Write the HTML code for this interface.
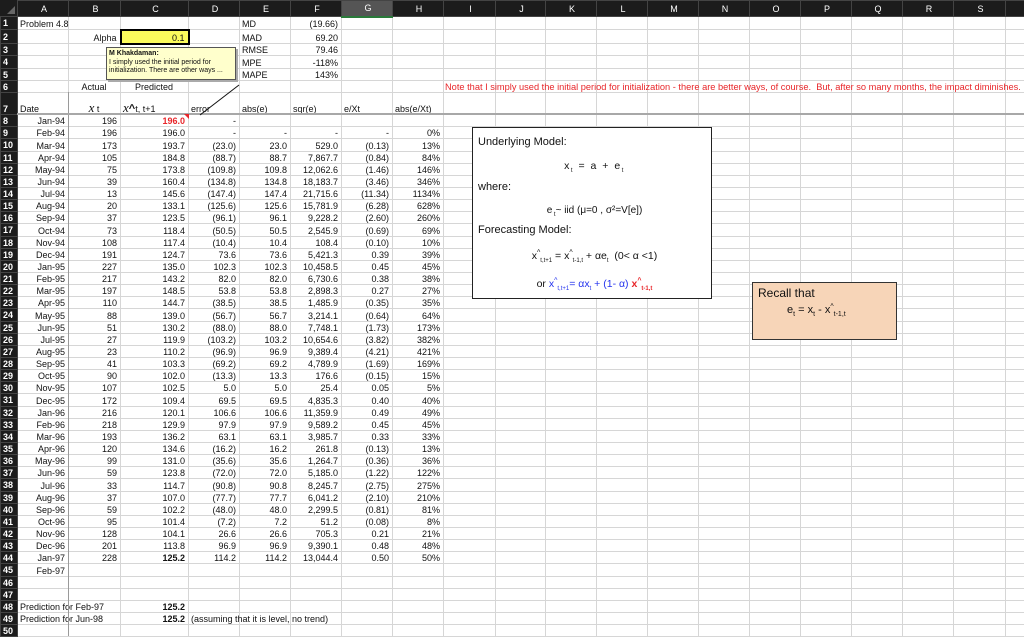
<!DOCTYPE html>
<html><head><meta charset="utf-8"><style>
*{margin:0;padding:0;box-sizing:border-box}
body{width:1024px;height:636px;overflow:hidden;background:#fff;font-family:"Liberation Sans",sans-serif;font-size:9px;color:#111;position:relative}
table{border-collapse:collapse;table-layout:fixed;position:absolute;left:0;top:0;width:1024px}
td{border:1px solid #d6d6d6;padding:0 3px 0 2px;white-space:nowrap;text-align:right;line-height:10px;overflow:visible;vertical-align:bottom}
th{background:#1c1c1c;color:#fff;font-weight:bold;border:1px solid #444;text-align:left;padding-left:2px;font-size:9px;line-height:10px}
thead th{text-align:center;font-weight:normal;height:16px;vertical-align:middle}
.l{text-align:left}
.c{text-align:center}
.b{font-weight:bold}
tr.h13 td,tr.h13 th{height:13px}
tbody tr td,tbody tr th{height:12px}
.ab{position:absolute}
sub,sup{line-height:0}
.bx div{position:absolute;left:5px;right:0;line-height:13px;white-space:nowrap}
</style></head><body>
<table>
<colgroup><col style="width:17px"><col style="width:51px"><col style="width:52px"><col style="width:68px"><col style="width:51px"><col style="width:51px"><col style="width:51px"><col style="width:51px"><col style="width:51px"><col style="width:52px"><col style="width:50px"><col style="width:51px"><col style="width:51px"><col style="width:51px"><col style="width:51px"><col style="width:51px"><col style="width:51px"><col style="width:51px"><col style="width:51px"><col style="width:52px"><col style="width:19px"></colgroup>
<thead><tr><th></th><th>A</th><th>B</th><th>C</th><th>D</th><th>E</th><th>F</th><th style="background:#555;border-bottom:2px solid #2a7a3a">G</th><th>H</th><th>I</th><th>J</th><th>K</th><th>L</th><th>M</th><th>N</th><th>O</th><th>P</th><th>Q</th><th>R</th><th>S</th><th></th></tr></thead>
<tbody>
<tr style="height:13px"><th style="height:13px">1</th><td class="l" style="height:13px">Problem 4.8</td><td></td><td></td><td></td><td class="l">MD</td><td>(19.66)</td><td></td><td></td><td></td><td></td><td></td><td></td><td></td><td></td><td></td><td></td><td></td><td></td><td></td><td></td></tr>
<tr><th style="height:14px">2</th><td style="height:14px"></td><td>Alpha</td><td style="background:#fbfb5c;border:2px solid #000">0.1</td><td></td><td class="l">MAD</td><td>69.20</td><td></td><td></td><td></td><td></td><td></td><td></td><td></td><td></td><td></td><td></td><td></td><td></td><td></td><td></td></tr>
<tr><th>3</th><td></td><td></td><td></td><td></td><td class="l">RMSE</td><td>79.46</td><td></td><td></td><td></td><td></td><td></td><td></td><td></td><td></td><td></td><td></td><td></td><td></td><td></td><td></td></tr>
<tr><th style="height:13px">4</th><td style="height:13px"></td><td></td><td></td><td></td><td class="l">MPE</td><td>-118%</td><td></td><td></td><td></td><td></td><td></td><td></td><td></td><td></td><td></td><td></td><td></td><td></td><td></td><td></td></tr>
<tr><th>5</th><td></td><td></td><td></td><td></td><td class="l">MAPE</td><td>143%</td><td></td><td></td><td></td><td></td><td></td><td></td><td></td><td></td><td></td><td></td><td></td><td></td><td></td><td></td></tr>
<tr><th>6</th><td></td><td class="c">Actual</td><td class="c">Predicted</td><td></td><td></td><td></td><td></td><td></td><td></td><td></td><td></td><td></td><td></td><td></td><td></td><td></td><td></td><td></td><td></td><td></td></tr>
<tr><th style="height:22px;vertical-align:bottom">7</th><td class="l" style="height:22px">Date</td><td class="c"><i style="font-family:'Liberation Serif',serif;font-size:13px">x</i> t</td><td class="l"><i style="font-family:'Liberation Serif',serif;font-size:13px">x</i><b style="font-size:11px">^</b>t, t+1</td><td class="l">error</td><td class="l">abs(e)</td><td class="l">sqr(e)</td><td class="l">e/Xt</td><td class="l">abs(e/Xt)</td><td></td><td></td><td></td><td></td><td></td><td></td><td></td><td></td><td></td><td></td><td></td><td></td></tr>
<tr><th>8</th><td>Jan-94</td><td>196</td><td class="b" style="color:#e8262a">196.0</td><td>-</td><td></td><td></td><td></td><td></td><td></td><td></td><td></td><td></td><td></td><td></td><td></td><td></td><td></td><td></td><td></td><td></td></tr>
<tr><th>9</th><td>Feb-94</td><td>196</td><td>196.0</td><td>-</td><td>-</td><td>-</td><td>-</td><td>0%</td><td></td><td></td><td></td><td></td><td></td><td></td><td></td><td></td><td></td><td></td><td></td><td></td></tr>
<tr class="h13"><th>10</th><td>Mar-94</td><td>173</td><td>193.7</td><td>(23.0)</td><td>23.0</td><td>529.0</td><td>(0.13)</td><td>13%</td><td></td><td></td><td></td><td></td><td></td><td></td><td></td><td></td><td></td><td></td><td></td><td></td></tr>
<tr><th>11</th><td>Apr-94</td><td>105</td><td>184.8</td><td>(88.7)</td><td>88.7</td><td>7,867.7</td><td>(0.84)</td><td>84%</td><td></td><td></td><td></td><td></td><td></td><td></td><td></td><td></td><td></td><td></td><td></td><td></td></tr>
<tr><th>12</th><td>May-94</td><td>75</td><td>173.8</td><td>(109.8)</td><td>109.8</td><td>12,062.6</td><td>(1.46)</td><td>146%</td><td></td><td></td><td></td><td></td><td></td><td></td><td></td><td></td><td></td><td></td><td></td><td></td></tr>
<tr><th>13</th><td>Jun-94</td><td>39</td><td>160.4</td><td>(134.8)</td><td>134.8</td><td>18,183.7</td><td>(3.46)</td><td>346%</td><td></td><td></td><td></td><td></td><td></td><td></td><td></td><td></td><td></td><td></td><td></td><td></td></tr>
<tr><th>14</th><td>Jul-94</td><td>13</td><td>145.6</td><td>(147.4)</td><td>147.4</td><td>21,715.6</td><td>(11.34)</td><td>1134%</td><td></td><td></td><td></td><td></td><td></td><td></td><td></td><td></td><td></td><td></td><td></td><td></td></tr>
<tr><th>15</th><td>Aug-94</td><td>20</td><td>133.1</td><td>(125.6)</td><td>125.6</td><td>15,781.9</td><td>(6.28)</td><td>628%</td><td></td><td></td><td></td><td></td><td></td><td></td><td></td><td></td><td></td><td></td><td></td><td></td></tr>
<tr><th>16</th><td>Sep-94</td><td>37</td><td>123.5</td><td>(96.1)</td><td>96.1</td><td>9,228.2</td><td>(2.60)</td><td>260%</td><td></td><td></td><td></td><td></td><td></td><td></td><td></td><td></td><td></td><td></td><td></td><td></td></tr>
<tr class="h13"><th>17</th><td>Oct-94</td><td>73</td><td>118.4</td><td>(50.5)</td><td>50.5</td><td>2,545.9</td><td>(0.69)</td><td>69%</td><td></td><td></td><td></td><td></td><td></td><td></td><td></td><td></td><td></td><td></td><td></td><td></td></tr>
<tr><th>18</th><td>Nov-94</td><td>108</td><td>117.4</td><td>(10.4)</td><td>10.4</td><td>108.4</td><td>(0.10)</td><td>10%</td><td></td><td></td><td></td><td></td><td></td><td></td><td></td><td></td><td></td><td></td><td></td><td></td></tr>
<tr><th>19</th><td>Dec-94</td><td>191</td><td>124.7</td><td>73.6</td><td>73.6</td><td>5,421.3</td><td>0.39</td><td>39%</td><td></td><td></td><td></td><td></td><td></td><td></td><td></td><td></td><td></td><td></td><td></td><td></td></tr>
<tr><th>20</th><td>Jan-95</td><td>227</td><td>135.0</td><td>102.3</td><td>102.3</td><td>10,458.5</td><td>0.45</td><td>45%</td><td></td><td></td><td></td><td></td><td></td><td></td><td></td><td></td><td></td><td></td><td></td><td></td></tr>
<tr><th>21</th><td>Feb-95</td><td>217</td><td>143.2</td><td>82.0</td><td>82.0</td><td>6,730.6</td><td>0.38</td><td>38%</td><td></td><td></td><td></td><td></td><td></td><td></td><td></td><td></td><td></td><td></td><td></td><td></td></tr>
<tr><th>22</th><td>Mar-95</td><td>197</td><td>148.5</td><td>53.8</td><td>53.8</td><td>2,898.3</td><td>0.27</td><td>27%</td><td></td><td></td><td></td><td></td><td></td><td></td><td></td><td></td><td></td><td></td><td></td><td></td></tr>
<tr><th>23</th><td>Apr-95</td><td>110</td><td>144.7</td><td>(38.5)</td><td>38.5</td><td>1,485.9</td><td>(0.35)</td><td>35%</td><td></td><td></td><td></td><td></td><td></td><td></td><td></td><td></td><td></td><td></td><td></td><td></td></tr>
<tr class="h13"><th>24</th><td>May-95</td><td>88</td><td>139.0</td><td>(56.7)</td><td>56.7</td><td>3,214.1</td><td>(0.64)</td><td>64%</td><td></td><td></td><td></td><td></td><td></td><td></td><td></td><td></td><td></td><td></td><td></td><td></td></tr>
<tr><th>25</th><td>Jun-95</td><td>51</td><td>130.2</td><td>(88.0)</td><td>88.0</td><td>7,748.1</td><td>(1.73)</td><td>173%</td><td></td><td></td><td></td><td></td><td></td><td></td><td></td><td></td><td></td><td></td><td></td><td></td></tr>
<tr><th>26</th><td>Jul-95</td><td>27</td><td>119.9</td><td>(103.2)</td><td>103.2</td><td>10,654.6</td><td>(3.82)</td><td>382%</td><td></td><td></td><td></td><td></td><td></td><td></td><td></td><td></td><td></td><td></td><td></td><td></td></tr>
<tr><th>27</th><td>Aug-95</td><td>23</td><td>110.2</td><td>(96.9)</td><td>96.9</td><td>9,389.4</td><td>(4.21)</td><td>421%</td><td></td><td></td><td></td><td></td><td></td><td></td><td></td><td></td><td></td><td></td><td></td><td></td></tr>
<tr><th>28</th><td>Sep-95</td><td>41</td><td>103.3</td><td>(69.2)</td><td>69.2</td><td>4,789.9</td><td>(1.69)</td><td>169%</td><td></td><td></td><td></td><td></td><td></td><td></td><td></td><td></td><td></td><td></td><td></td><td></td></tr>
<tr><th>29</th><td>Oct-95</td><td>90</td><td>102.0</td><td>(13.3)</td><td>13.3</td><td>176.6</td><td>(0.15)</td><td>15%</td><td></td><td></td><td></td><td></td><td></td><td></td><td></td><td></td><td></td><td></td><td></td><td></td></tr>
<tr><th>30</th><td>Nov-95</td><td>107</td><td>102.5</td><td>5.0</td><td>5.0</td><td>25.4</td><td>0.05</td><td>5%</td><td></td><td></td><td></td><td></td><td></td><td></td><td></td><td></td><td></td><td></td><td></td><td></td></tr>
<tr class="h13"><th>31</th><td>Dec-95</td><td>172</td><td>109.4</td><td>69.5</td><td>69.5</td><td>4,835.3</td><td>0.40</td><td>40%</td><td></td><td></td><td></td><td></td><td></td><td></td><td></td><td></td><td></td><td></td><td></td><td></td></tr>
<tr><th>32</th><td>Jan-96</td><td>216</td><td>120.1</td><td>106.6</td><td>106.6</td><td>11,359.9</td><td>0.49</td><td>49%</td><td></td><td></td><td></td><td></td><td></td><td></td><td></td><td></td><td></td><td></td><td></td><td></td></tr>
<tr><th>33</th><td>Feb-96</td><td>218</td><td>129.9</td><td>97.9</td><td>97.9</td><td>9,589.2</td><td>0.45</td><td>45%</td><td></td><td></td><td></td><td></td><td></td><td></td><td></td><td></td><td></td><td></td><td></td><td></td></tr>
<tr><th>34</th><td>Mar-96</td><td>193</td><td>136.2</td><td>63.1</td><td>63.1</td><td>3,985.7</td><td>0.33</td><td>33%</td><td></td><td></td><td></td><td></td><td></td><td></td><td></td><td></td><td></td><td></td><td></td><td></td></tr>
<tr><th>35</th><td>Apr-96</td><td>120</td><td>134.6</td><td>(16.2)</td><td>16.2</td><td>261.8</td><td>(0.13)</td><td>13%</td><td></td><td></td><td></td><td></td><td></td><td></td><td></td><td></td><td></td><td></td><td></td><td></td></tr>
<tr><th>36</th><td>May-96</td><td>99</td><td>131.0</td><td>(35.6)</td><td>35.6</td><td>1,264.7</td><td>(0.36)</td><td>36%</td><td></td><td></td><td></td><td></td><td></td><td></td><td></td><td></td><td></td><td></td><td></td><td></td></tr>
<tr><th>37</th><td>Jun-96</td><td>59</td><td>123.8</td><td>(72.0)</td><td>72.0</td><td>5,185.0</td><td>(1.22)</td><td>122%</td><td></td><td></td><td></td><td></td><td></td><td></td><td></td><td></td><td></td><td></td><td></td><td></td></tr>
<tr class="h13"><th>38</th><td>Jul-96</td><td>33</td><td>114.7</td><td>(90.8)</td><td>90.8</td><td>8,245.7</td><td>(2.75)</td><td>275%</td><td></td><td></td><td></td><td></td><td></td><td></td><td></td><td></td><td></td><td></td><td></td><td></td></tr>
<tr><th>39</th><td>Aug-96</td><td>37</td><td>107.0</td><td>(77.7)</td><td>77.7</td><td>6,041.2</td><td>(2.10)</td><td>210%</td><td></td><td></td><td></td><td></td><td></td><td></td><td></td><td></td><td></td><td></td><td></td><td></td></tr>
<tr><th>40</th><td>Sep-96</td><td>59</td><td>102.2</td><td>(48.0)</td><td>48.0</td><td>2,299.5</td><td>(0.81)</td><td>81%</td><td></td><td></td><td></td><td></td><td></td><td></td><td></td><td></td><td></td><td></td><td></td><td></td></tr>
<tr><th>41</th><td>Oct-96</td><td>95</td><td>101.4</td><td>(7.2)</td><td>7.2</td><td>51.2</td><td>(0.08)</td><td>8%</td><td></td><td></td><td></td><td></td><td></td><td></td><td></td><td></td><td></td><td></td><td></td><td></td></tr>
<tr><th>42</th><td>Nov-96</td><td>128</td><td>104.1</td><td>26.6</td><td>26.6</td><td>705.3</td><td>0.21</td><td>21%</td><td></td><td></td><td></td><td></td><td></td><td></td><td></td><td></td><td></td><td></td><td></td><td></td></tr>
<tr><th>43</th><td>Dec-96</td><td>201</td><td>113.8</td><td>96.9</td><td>96.9</td><td>9,390.1</td><td>0.48</td><td>48%</td><td></td><td></td><td></td><td></td><td></td><td></td><td></td><td></td><td></td><td></td><td></td><td></td></tr>
<tr><th>44</th><td>Jan-97</td><td>228</td><td class="b">125.2</td><td>114.2</td><td>114.2</td><td>13,044.4</td><td>0.50</td><td>50%</td><td></td><td></td><td></td><td></td><td></td><td></td><td></td><td></td><td></td><td></td><td></td><td></td></tr>
<tr class="h13"><th>45</th><td>Feb-97</td><td></td><td></td><td></td><td></td><td></td><td></td><td></td><td></td><td></td><td></td><td></td><td></td><td></td><td></td><td></td><td></td><td></td><td></td><td></td></tr>
<tr><th>46</th><td></td><td></td><td></td><td></td><td></td><td></td><td></td><td></td><td></td><td></td><td></td><td></td><td></td><td></td><td></td><td></td><td></td><td></td><td></td><td></td></tr>
<tr><th>47</th><td></td><td></td><td></td><td></td><td></td><td></td><td></td><td></td><td></td><td></td><td></td><td></td><td></td><td></td><td></td><td></td><td></td><td></td><td></td><td></td></tr>
<tr><th>48</th><td class="l">Prediction for Feb-97</td><td></td><td class="b">125.2</td><td></td><td></td><td></td><td></td><td></td><td></td><td></td><td></td><td></td><td></td><td></td><td></td><td></td><td></td><td></td><td></td><td></td></tr>
<tr><th>49</th><td class="l">Prediction for Jun-98</td><td></td><td class="b">125.2</td><td class="l">(assuming that it is level, no trend)</td><td></td><td></td><td></td><td></td><td></td><td></td><td></td><td></td><td></td><td></td><td></td><td></td><td></td><td></td><td></td><td></td></tr>
<tr><th>50</th><td></td><td></td><td></td><td></td><td></td><td></td><td></td><td></td><td></td><td></td><td></td><td></td><td></td><td></td><td></td><td></td><td></td><td></td><td></td><td></td></tr>
</tbody></table>

<div class="ab" style="left:68px;top:92px;width:1px;height:544px;background:#9a9a9a"></div>
<div class="ab" style="left:17px;top:113px;width:1007px;height:2px;background:#a8a8a8"></div>
<div class="ab" style="left:0;top:0;width:17px;height:16px;background:#1c1c1c"></div>
<div class="ab" style="left:7px;top:6px;width:0;height:0;border-left:8px solid transparent;border-bottom:8px solid #666"></div>

<div class="ab" style="left:445px;top:82px;color:#e8262a;font-size:9.25px;white-space:nowrap">Note that I simply used the initial period for initialization - there are better ways, of course.&nbsp; But, after so many months, the impact diminishes.</div>

<div class="ab" style="left:106px;top:47px;width:130px;height:33px;background:#ffffcc;border:1px solid #555;box-shadow:2px 2px 0 #aaa;font-size:7px;line-height:8.5px;padding:2px 2px">
<b>M Khakdaman:</b><br>I simply used the initial period for<br>initialization. There are other ways ...</div>

<svg class="ab" style="left:0;top:0" width="1024" height="636"><line x1="200" y1="115" x2="239" y2="85" stroke="#111" stroke-width="1"/><polygon points="184,114 189,114 189,119" fill="#e8262a"/></svg>

<div class="ab bx" style="left:472px;top:127px;width:240px;height:172px;background:#fff;border:1px solid #222;font-size:11px;color:#111">
<div style="top:8px">Underlying Model:</div>
<div style="top:32px;text-align:center;letter-spacing:1.5px;font-size:10.5px">x<sub style="font-size:6px">t</sub> = a + e<sub style="font-size:6px">t</sub></div>
<div style="top:53px">where:</div>
<div style="top:76px;text-align:center;font-size:10px">e<sub style="font-size:6px"> t</sub>~ iid (μ=0 , σ²=V[e])</div>
<div style="top:96px">Forecasting Model:</div>
<div style="top:122px;text-align:center;font-size:10.5px">x<sup style="font-size:7px">^</sup><sub style="font-size:6px">t,t+1</sub> = x<sup style="font-size:7px">^</sup><sub style="font-size:6px">t-1,t</sub> + αe<sub style="font-size:6px">t</sub>&nbsp; (0&lt; α &lt;1)</div>
<div style="top:150px;text-align:center;font-size:10.5px">or <span style="color:#2433ee">x<sup style="font-size:7px">^</sup><sub style="font-size:6px">t,t+1</sub>= αx<sub style="font-size:6px">t</sub> + (1- α)</span> <b style="color:#e8262a">x<sup style="font-size:7px">^</sup><sub style="font-size:6px">t-1,t</sub></b></div>
</div>

<div class="ab" style="left:752px;top:282px;width:145px;height:58px;background:#f7d5b8;border:1px solid #333;padding:3px 0 0 5px;font-size:12px;line-height:14px">
<div>Recall that</div>
<div style="margin-left:29px;margin-top:3px;font-size:11px">e<sub style="font-size:7px">t</sub> = x<sub style="font-size:7px">t</sub> - x<sup style="font-size:7px">^</sup><sub style="font-size:7px">t-1,t</sub></div>
</div>
</body></html>
